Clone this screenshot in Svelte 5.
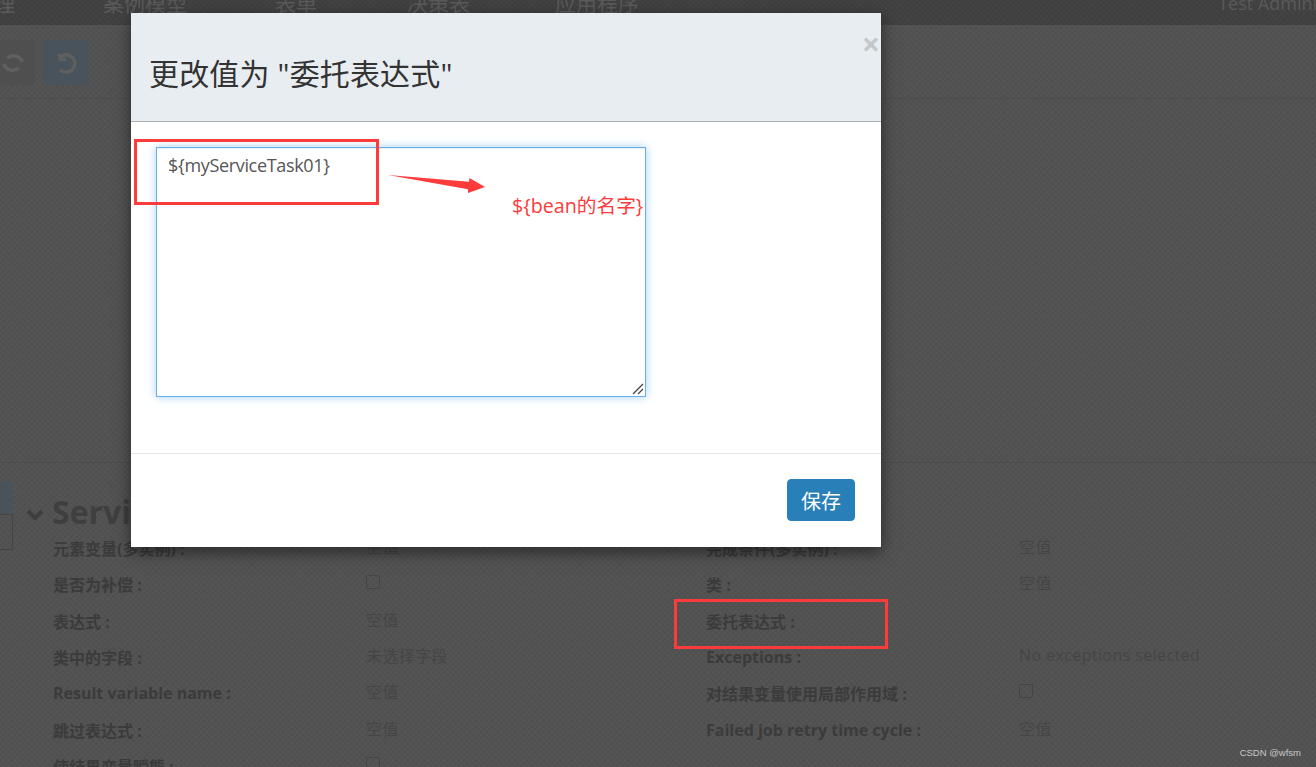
<script>
  const nav = [
    { label: '流程管理', left: -69 },
    { label: '案例模型', left: 88 },
    { label: '表单', left: 88 },
    { label: '决策表', left: 90 },
    { label: '应用程序', left: 85 }
  ];

  const rows = [
    ['元素变量(多实例) :', '空值', '完成条件(多实例) :', '空值'],
    ['是否为补偿 :', null, '类 :', '空值'],
    ['表达式 :', '空值', '委托表达式 :', ''],
    ['类中的字段 :', '未选择字段', 'Exceptions :', 'No exceptions selected'],
    ['Result variable name :', '空值', '对结果变量使用局部作用域 :', null],
    ['跳过表达式 :', '空值', 'Failed job retry time cycle :', '空值'],
    ['使结果变量瞬態 :', null, '', '']
  ];

  let value = '${myServiceTask01}';
</script>

<div class="page">
  <header class="topbar">
    <nav class="nav">
      {#each nav as item}
        <span style="margin-left: {item.left}px">{item.label}</span>
      {/each}
    </nav>
    <span class="user">Test Administrator</span>
  </header>

  <div class="toolbar">
    <div class="tool">
      <svg viewBox="0 0 24 24" width="28" height="28"><path d="M7 8a8 8 0 0 1 13 3M17 16a8 8 0 0 1-13-3" /></svg>
    </div>
    <div class="tool blue">
      <svg viewBox="0 0 24 24" width="28" height="28"><path d="M7 7a7.5 7.5 0 1 1 0 11M6 4l1 5h5" /></svg>
    </div>
  </div>

  <div class="canvas"></div>

  <section class="panel">
    <div class="tab"><div class="tab-on"></div><div class="tab-off"></div></div>
    <div class="panel-head">
      <svg class="chev" viewBox="0 0 18 14" width="18" height="14"><path d="M2 3l7 7 7-7" /></svg>
      <h2>Service task</h2>
    </div>
    <div class="props">
      {#each rows as row}
        {#each row as cell, i}
          {#if cell === null}
            <div class="prop value"><span class="check"></span></div>
          {:else}
            <div class="prop" class:label={i % 2 === 0} class:value={i % 2 === 1}>{cell}</div>
          {/if}
        {/each}
      {/each}
    </div>
  </section>

  <div class="modal">
    <div class="modal-header">
      <h3>更改值为 "委托表达式"</h3>
      <span class="close">×</span>
    </div>
    <div class="modal-body">
      <div class="field">
        <textarea bind:value spellcheck="false"></textarea>
        <svg class="grip" viewBox="0 0 12 12" width="12" height="12"><path d="M1 11L11 1M6 11L11 6" /></svg>
      </div>
    </div>
    <div class="modal-footer">
      <button>保存</button>
    </div>
  </div>

  <div class="mark mark-one"></div>
  <div class="mark mark-two"></div>
  <svg class="arrow" viewBox="0 0 100 20" width="100" height="20">
    <path d="M0 1L81 7.7L81.5 4L97 13L80 19L80 15.3Z" />
  </svg>
  <span class="note">{'${bean的名字}'}</span>
  <span class="credit">CSDN @wfsm</span>
</div>

<style>
  :global(body) {
    margin: 0;
    font-family: "Open Sans", "Noto Sans CJK SC", sans-serif;
  }

  .page {
    position: relative;
    display: flex;
    flex-direction: column;
    height: 767px;
    overflow: hidden;
    background-color: #525252;
    background-image:
      repeating-linear-gradient(45deg, rgba(0, 0, 0, 0.03) 0 2px, transparent 2px 4px),
      repeating-linear-gradient(-45deg, rgba(255, 255, 255, 0.015) 0 2px, transparent 2px 4px);
  }

  .topbar {
    display: flex;
    justify-content: space-between;
    height: 25px;
    flex: none;
    overflow: hidden;
    background: rgba(0, 0, 0, 0.2);
    color: #5a5a5a;
    font-size: 21px;
    line-height: 26px;
  }
  .nav { display: flex; margin-top: -10px; }
  .user { margin-top: -10px; margin-right: -58px; font-size: 18px; color: #5a5a5a; }

  .toolbar {
    display: flex;
    gap: 8px;
    height: 74px;
    flex: none;
    margin-left: -10px;
    padding-top: 15px;
    box-sizing: border-box;
    border-bottom: 1px solid #4d4d4d;
  }
  .tool {
    display: flex;
    align-items: center;
    justify-content: center;
    width: 45px;
    height: 45px;
    border-radius: 4px;
    box-sizing: border-box;
    background: #4f4f4f;
  }
  .tool.blue { background: #48535b; }
  .tool svg { fill: none; stroke: #5f5f5f; stroke-width: 3; }

  .canvas { flex: 1; }

  .panel {
    position: relative;
    height: 305px;
    flex: none;
    box-sizing: border-box;
    border-top: 1px solid #4c4c4c;
    overflow: hidden;
  }
  .tab { position: absolute; left: 0; top: 19px; width: 13px; }
  .tab-on { height: 32px; background: #48535b; }
  .tab-off { height: 34px; border: 1px solid #454545; border-left: 0; }

  .panel-head {
    display: flex;
    align-items: center;
    gap: 8px;
    height: 51px;
    margin-top: 23px;
    padding-left: 26px;
  }
  .chev { margin-top: 6px; fill: none; stroke: #3e3e3e; stroke-width: 4; }
  h2 {
    margin: 0;
    font-size: 32px;
    font-weight: 700;
    color: #3f3f3f;
  }

  .props {
    display: grid;
    grid-template-columns: 313px 340px 313px 1fr;
    grid-auto-rows: 36.3px;
    margin-top: -7px;
    padding-left: 53px;
    font-size: 16px;
  }
  .prop { display: flex; align-items: center; white-space: nowrap; }
  .label { font-weight: 700; color: #3b3b3b; }
  .value {
    margin-top: -4px;
    letter-spacing: 0.4px;
    color: #454545;
  }
  .check {
    width: 12px;
    height: 12px;
    border: 1px solid #454545;
    border-radius: 2px;
  }

  .modal {
    position: absolute;
    left: 131px;
    top: 13px;
    display: flex;
    flex-direction: column;
    width: 750px;
    height: 534px;
    background: #fff;
    box-shadow: 0 5px 15px rgba(0, 0, 0, 0.5);
  }
  .modal-header {
    position: relative;
    display: flex;
    align-items: center;
    height: 109px;
    flex: none;
    box-sizing: border-box;
    padding: 9px 18px 0;
    background: #e8edf1;
    border-bottom: 1px solid #aeb1b3;
  }
  h3 {
    margin: 0;
    font-size: 30px;
    font-weight: 400;
    letter-spacing: 0.15px;
    color: #333;
  }
  .close {
    position: absolute;
    right: 1px;
    top: 14px;
    font-size: 32px;
    font-weight: 700;
    line-height: 34px;
    color: #c4c8cb;
  }
  .modal-body {
    flex: 1;
    padding: 25px 25px 0;
  }
  .field { position: relative; width: 490px; }
  textarea {
    display: block;
    width: 490px;
    height: 250px;
    box-sizing: border-box;
    padding: 4px 11px;
    border: 1px solid #66afe9;
    outline: 0;
    resize: none;
    box-shadow: inset 0 1px 1px rgba(0, 0, 0, 0.075), 0 0 8px rgba(102, 175, 233, 0.6);
    font-family: "Open Sans", "Noto Sans CJK SC", sans-serif;
    font-size: 18px;
    letter-spacing: -0.33px;
    line-height: 27px;
    color: #555;
  }
  .grip {
    position: absolute;
    right: 2px;
    bottom: 2px;
    fill: none;
    stroke: #444;
    stroke-width: 1.3;
  }
  .modal-footer {
    display: flex;
    justify-content: flex-end;
    align-items: center;
    height: 94px;
    flex: none;
    box-sizing: border-box;
    padding-right: 26px;
    padding-bottom: 1px;
    border-top: 1px solid #e5e5e5;
  }
  button {
    width: 68px;
    height: 42px;
    padding: 0;
    border: 1px solid #2a7fb8;
    border-radius: 4px;
    background: #2980b9;
    color: #fff;
    font-family: "Open Sans", "Noto Sans CJK SC", sans-serif;
    font-size: 20px;
  }

  .mark {
    position: absolute;
    box-sizing: border-box;
    border: 3px solid #fd3b3b;
  }
  .mark-one { left: 134px; top: 139px; width: 245px; height: 66px; }
  .mark-two { left: 674px; top: 599px; width: 214px; height: 50px; }

  .arrow { position: absolute; left: 388px; top: 174px; fill: #fd3b3b; }
  .note {
    position: absolute;
    left: 512px;
    top: 193px;
    font-size: 19.7px;
    line-height: 26px;
    color: #fd3b3b;
  }
  .credit {
    position: absolute;
    right: 15px;
    bottom: 9px;
    font-family: "Liberation Sans", sans-serif;
    font-size: 9.5px;
    color: #c8c8c8;
  }
</style>
